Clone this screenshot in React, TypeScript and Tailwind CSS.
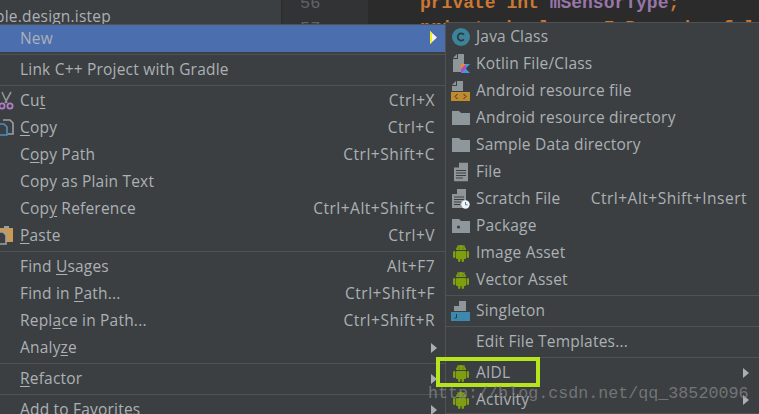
import React from "react";

const Android = () => (
  <svg width="16" height="18" viewBox="0 0 16 18">
    <path d="M3 6a5 5 0 0 1 10 0z" fill="#7f9f0f" />
    <path d="M4.5 1l1.5 2.5M11.5 1l-1.5 2.5" stroke="#7f9f0f" strokeWidth="0.8" />
    <rect x="3" y="7" width="10" height="8" rx="1" fill="#7f9f0f" />
    <rect x="0" y="7" width="2.4" height="7" rx="1.2" fill="#7f9f0f" />
    <rect x="13.6" y="7" width="2.4" height="7" rx="1.2" fill="#7f9f0f" />
    <rect x="5" y="14" width="2.4" height="4" rx="1.2" fill="#7f9f0f" />
    <rect x="8.6" y="14" width="2.4" height="4" rx="1.2" fill="#7f9f0f" />
    <circle cx="6" cy="4" r="0.6" fill="#3c3f41" />
    <circle cx="10" cy="4" r="0.6" fill="#3c3f41" />
  </svg>
);

const Folder = ({ dot = false }: { dot?: boolean }) => (
  <svg width="18" height="14" viewBox="0 0 18 14">
    <path d="M0 0h7l2 2h9v12H0z" fill="#8e979c" />
    {dot && <circle cx="6.5" cy="8" r="1.6" fill="#3c3f41" />}
  </svg>
);

const JavaClass = () => (
  <svg width="18" height="18" viewBox="0 0 18 18">
    <circle cx="9" cy="9" r="9" fill="#3d8399" />
    <path d="M12 6.6A3.6 3.6 0 1 0 12 11.4" fill="none" stroke="#2b3a40" strokeWidth="1.7" />
  </svg>
);

const Kotlin = () => (
  <svg width="18" height="20" viewBox="0 0 18 20">
    <path d="M6 0h6v10H9v8H1V5h5z" fill="#8f969a" />
    <path d="M1 4l4-4v4z" fill="#8f969a" />
    <path d="M9 10h9l-4.5 4.5L18 19H9z" fill="#3c9be8" />
    <path d="M9 10h5l-5 5z" fill="#f08a24" />
    <path d="M9 15l4.5-4.5 1 4-5.5 4.5z" fill="#b74ac0" />
  </svg>
);

const Resource = () => (
  <svg width="19" height="20" viewBox="0 0 19 20">
    <path d="M6 0h6v10H1V5h5z" fill="#8f969a" />
    <path d="M1 4l4-4v4z" fill="#8f969a" />
    <rect x="0" y="11" width="19" height="9" fill="#c08a2e" />
    <path d="M6.5 13l-2.5 2.5L6.5 18M12.5 13l2.5 2.5L12.5 18" fill="none" stroke="#333" strokeWidth="1" />
  </svg>
);

const FileIcon = () => (
  <svg width="14" height="19" viewBox="0 0 14 19">
    <path d="M5 0h9v19H0V5h5z" fill="#8f969a" />
    <path d="M2 8h10M2 10.5h10M2 13h10M2 15.5h7" stroke="#3c3f41" strokeWidth="1" />
  </svg>
);

const Scratch = () => (
  <svg width="18" height="20" viewBox="0 0 18 20">
    <path d="M5 0h9v19H0V5h5z" fill="#8f969a" />
    <path d="M2 8h10M2 10.5h10M2 13h7M2 15.5h6" stroke="#3c3f41" strokeWidth="1" />
    <circle cx="13.5" cy="15.5" r="4.2" fill="#f2f4f5" />
    <path d="M13.5 13v2.8h2" fill="none" stroke="#3b85b5" strokeWidth="1" />
  </svg>
);

const Singleton = () => (
  <svg width="19" height="20" viewBox="0 0 19 20">
    <path d="M8 0h7v10H3V5h5z" fill="#8f969a" />
    <rect x="0" y="11" width="19" height="9" fill="#3d88ad" />
    <path d="M5.5 13v4h-2" fill="none" stroke="#24404f" strokeWidth="1" />
  </svg>
);

const Scissors = () => (
  <svg width="14" height="20" viewBox="0 0 14 20" className="block">
    <path d="M2 1l5 11M11 1L5 12" stroke="#8e9498" strokeWidth="1.6" fill="none" />
    <circle cx="2" cy="15" r="2.6" fill="none" stroke="#b07cc6" strokeWidth="1.8" />
    <circle cx="10" cy="15" r="2.6" fill="none" stroke="#b07cc6" strokeWidth="1.8" />
  </svg>
);

const CopyIcon = () => (
  <svg width="14" height="18" viewBox="0 0 14 18" className="block">
    <path d="M3 1h7l3 3v11H8" fill="none" stroke="#9aa0a4" strokeWidth="1.6" />
    <path d="M-2 5h6l3 3v8h-9z" fill="#3c3f41" stroke="#4a90c0" strokeWidth="1.6" />
  </svg>
);

const PasteIcon = () => (
  <svg width="14" height="20" viewBox="0 0 14 20" className="block">
    <rect x="-3" y="2" width="16" height="14" fill="#c99a55" />
    <rect x="4" y="0" width="5" height="3" fill="#9aa0a4" />
    <path d="M-2 6h5l3 3v9h-8z" fill="#3c3f41" stroke="#9aa0a4" strokeWidth="1.6" />
  </svg>
);

const ArrowHead = ({ className }: { className: string }) => (
  <span
    className={`absolute top-1/2 h-0 w-0 -translate-y-1/2 border-y-[5px] border-l-[6px] border-y-transparent border-l-[#a9afb3] ${className}`}
  />
);

const Sep = () => (
  <div className="flex h-[4px] items-center">
    <div className="h-px w-full bg-[#515253]" />
  </div>
);

type LeftProps = {
  pre?: string;
  u?: string;
  post?: string;
  shortcut?: string;
  arrow?: boolean;
  icon?: React.ReactNode;
  active?: boolean;
};

const LeftRow = ({ pre, u, post, shortcut, arrow, icon, active }: LeftProps) => (
  <div className={`relative flex h-[27px] items-center pl-[20px] pr-[10px] ${active ? "bg-[#4b6eaf]" : ""}`}>
    {icon && <span className="absolute left-0 top-1/2 -translate-y-1/2">{icon}</span>}
    <span>
      {pre}
      {u && <span className="underline underline-offset-2">{u}</span>}
      {post}
    </span>
    {shortcut && <span className="ml-auto tracking-[0.5px]">{shortcut}</span>}
    {arrow && <ArrowHead className="right-[8px]" />}
  </div>
);

const RightRow = ({ icon, label, shortcut, arrow }: { icon?: React.ReactNode; label: string; shortcut?: string; arrow?: boolean }) => (
  <div className="relative flex h-[27px] items-center pl-[30px] pr-[17px]">
    <span className="absolute left-[5px] top-1/2 flex w-[19px] -translate-y-1/2 justify-center">{icon}</span>
    <span>{label}</span>
    {shortcut && <span className="ml-auto tracking-[0.5px]">{shortcut}</span>}
    {arrow && <ArrowHead className="right-[15px]" />}
  </div>
);

export default function App() {
  return (
    <div
      className="relative h-[414px] w-[759px] overflow-hidden bg-[#3c3f41] text-[15.5px] leading-none tracking-[0.2px] text-[#abb1b5]"
      style={{ fontFamily: '"Open Sans", "Noto Sans", sans-serif' }}
    >
      <div className="flex h-[30px]">
        <div className="w-[281px] overflow-hidden whitespace-nowrap pt-[9px]">
          <span className="ml-[-5px] block">ple.design.istep</span>
        </div>
        <div className="w-[87px] border-l border-[#2b2b2b] bg-[#313335] pl-[18px] font-['Liberation_Mono',monospace] text-[17px] leading-[27px] tracking-normal text-[#606366]">
          <div className="mt-[-10px]">56</div>
          <div className="mt-[-2px]">57</div>
        </div>
        <div className="flex-1 whitespace-nowrap bg-[#2b2b2b] pl-[52px] font-['Liberation_Mono',monospace] text-[18px] font-bold leading-[27px] tracking-normal text-[#cc7832]">
          <div className="mt-[-10px]">
            private int <span className="text-[#9876aa]">mSensorType</span>;
          </div>
          <div className="mt-[-2px]">private boolean mIsPaused = fal</div>
        </div>
      </div>

      {/* main context menu */}
      <div className="absolute left-[-1px] top-[24px] w-[447px] whitespace-nowrap border border-[#515253] bg-[#3c3f41]">
        <LeftRow pre="New" active />
        <Sep />
        <LeftRow pre="Link C++ Project with Gradle" />
        <Sep />
        <LeftRow pre="Cu" u="t" shortcut="Ctrl+X" icon={<Scissors />} />
        <LeftRow u="C" post="opy" shortcut="Ctrl+C" icon={<CopyIcon />} />
        <LeftRow pre="C" u="o" post="py Path" shortcut="Ctrl+Shift+C" />
        <LeftRow pre="Copy as Plain Text" />
        <LeftRow pre="Cop" u="y" post=" Reference" shortcut="Ctrl+Alt+Shift+C" />
        <LeftRow u="P" post="aste" shortcut="Ctrl+V" icon={<PasteIcon />} />
        <Sep />
        <LeftRow pre="Find " u="U" post="sages" shortcut="Alt+F7" />
        <LeftRow pre="Find in " u="P" post="ath..." shortcut="Ctrl+Shift+F" />
        <LeftRow pre="Repl" u="a" post="ce in Path..." shortcut="Ctrl+Shift+R" />
        <LeftRow pre="Analy" u="z" post="e" arrow />
        <Sep />
        <LeftRow u="R" post="efactor" arrow />
        <Sep />
        <LeftRow pre="Add to Favorites" arrow />
      </div>

      {/* submenu */}
      <div className="absolute left-[445px] top-[22px] w-[320px] whitespace-nowrap border border-[#515253] bg-[#3c3f41]">
        <RightRow icon={<JavaClass />} label="Java Class" />
        <RightRow icon={<Kotlin />} label="Kotlin File/Class" />
        <RightRow icon={<Resource />} label="Android resource file" />
        <RightRow icon={<Folder />} label="Android resource directory" />
        <RightRow icon={<Folder />} label="Sample Data directory" />
        <RightRow icon={<FileIcon />} label="File" />
        <RightRow icon={<Scratch />} label="Scratch File" shortcut="Ctrl+Alt+Shift+Insert" />
        <RightRow icon={<Folder dot />} label="Package" />
        <RightRow icon={<Android />} label="Image Asset" />
        <RightRow icon={<Android />} label="Vector Asset" />
        <Sep />
        <RightRow icon={<Singleton />} label="Singleton" />
        <Sep />
        <RightRow label="Edit File Templates..." />
        <Sep />
        <RightRow icon={<Android />} label="AIDL" arrow />
        <RightRow icon={<Android />} label="Activity" arrow />
      </div>

      {/* cursor on New */}
      <svg className="absolute left-[430px] top-[31px]" width="8" height="13" viewBox="0 0 8 13">
        <path d="M0 0l7 6.5L0 13z" fill="#f4f4e8" />
        <path d="M0 0l2 2v9l-2 2z" fill="#f2f020" />
      </svg>

      {/* highlight box */}
      <div className="absolute left-[436px] top-[357px] h-[30px] w-[104px] border-[4px] border-[#b5e61d]" />

      {/* watermark */}
      <div className="absolute left-[428px] top-[384px] whitespace-nowrap font-['Liberation_Mono',monospace] text-[16.7px] leading-[20px] tracking-normal text-[#8a8d8f]/70">
        http://blog.csdn.net/qq_38520096
      </div>
    </div>
  );
}
